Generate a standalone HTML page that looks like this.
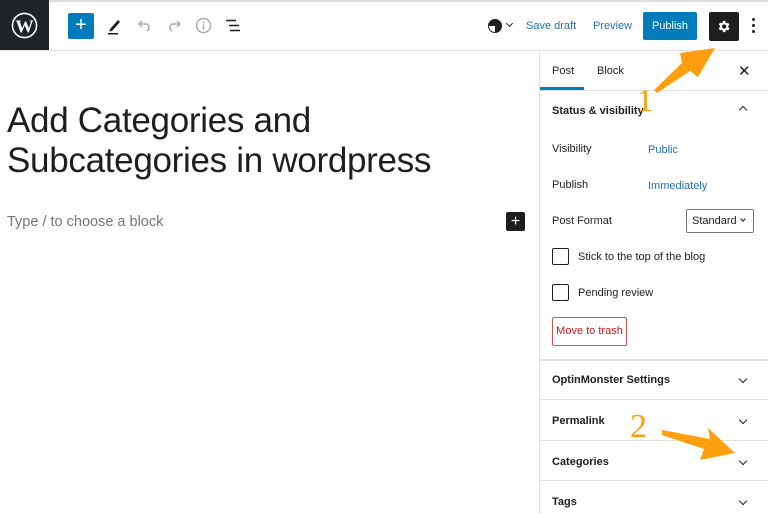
<!DOCTYPE html>
<html><head><meta charset="utf-8"><style>
*{margin:0;padding:0;box-sizing:border-box}
body{width:768px;height:514px;overflow:hidden;background:#fff;font-family:"Liberation Sans",sans-serif;color:#1e1e1e;position:relative}
.a{position:absolute}
.t{font-size:11px;white-space:nowrap}
.b{font-weight:bold;font-size:11px;white-space:nowrap}
.blue{color:#2271b1}
.hr{position:absolute;left:539px;width:229px;height:1px;background:#e0e0e0}
.chev{position:absolute;width:6px;height:6px;border-right:1.5px solid #1e1e1e;border-bottom:1.5px solid #1e1e1e;transform:rotate(45deg)}
.cb{position:absolute;left:552px;width:17px;height:17px;border:1.5px solid #1e1e1e;border-radius:2px}
</style></head><body>
<div class="a" style="left:0;top:0;width:768px;height:2px;background:#ddd"></div>
<div class="a" style="left:0;top:0;width:49px;height:50px;background:#1d2327"></div>
<svg class="a" style="left:11px;top:12px" width="27" height="27" viewBox="0 0 28 28"><circle cx="14" cy="14" r="12.5" fill="none" stroke="#fff" stroke-width="1.6"/><text x="14" y="21" font-family="Liberation Serif" font-weight="bold" font-size="19" fill="#fff" text-anchor="middle">W</text></svg>
<div class="a" style="left:0;top:50px;width:768px;height:1px;background:#e0e0e0"></div>
<div class="a" style="left:68px;top:13px;width:26px;height:26px;background:#007cba;border-radius:2px;color:#fff;font-size:20px;line-height:25px;text-align:center">+</div>
<svg class="a" style="left:106px;top:16px" width="18" height="20" viewBox="0 0 18 20"><path d="M4 13 L12 4 L14 6 L6 15 L3.5 15.5 Z" fill="#1e1e1e"/><rect x="2" y="17" width="10" height="1.5" fill="#1e1e1e"/></svg>
<svg class="a" style="left:137px;top:18px" width="16" height="14" viewBox="0 0 16 14"><path d="M5 3 L2 6 L5 9 M2 6 H10 a4 4 0 0 1 0 7" fill="none" stroke="#aaa" stroke-width="1.5"/></svg>
<svg class="a" style="left:166px;top:18px" width="16" height="14" viewBox="0 0 16 14"><path d="M11 3 L14 6 L11 9 M14 6 H6 a4 4 0 0 0 0 7" fill="none" stroke="#aaa" stroke-width="1.5"/></svg>
<svg class="a" style="left:195px;top:17px" width="17" height="17" viewBox="0 0 17 17"><circle cx="8.5" cy="8.5" r="7" fill="none" stroke="#aaa" stroke-width="1.4"/><rect x="7.8" y="7.5" width="1.5" height="5" fill="#aaa"/><rect x="7.8" y="4.5" width="1.5" height="1.5" fill="#aaa"/></svg>
<svg class="a" style="left:224px;top:18px" width="18" height="15" viewBox="0 0 18 15"><path d="M2 2.5H12M5 7.5H15M6 12.5H16" stroke="#1e1e1e" stroke-width="1.5"/></svg>
<svg class="a" style="left:487px;top:18px" width="16" height="16" viewBox="0 0 16 16"><circle cx="8" cy="8" r="7" fill="#1e1e1e"/><path d="M8 8 H2 A6 6 0 0 0 8 14Z" fill="#fff"/></svg>
<div class="chev" style="left:507px;top:21px;width:5px;height:5px;border-width:1.3px"></div>
<div class="a t blue" style="left:526px;top:20px">Save draft</div>
<div class="a t blue" style="left:593px;top:20px">Preview</div>
<div class="a" style="left:643px;top:12px;width:54px;height:28px;background:#007cba;border-radius:2px;color:#fff;font-size:11px;line-height:28px;text-align:center">Publish</div>
<div class="a" style="left:709px;top:12px;width:30px;height:29px;background:#1e1e1e;border-radius:2px"></div>
<svg class="a" style="left:716px;top:19px" width="15" height="15" viewBox="0 0 24 24"><path fill="#fff" d="M19.4 13a7.5 7.5 0 0 0 0-2l2.1-1.6-2-3.5-2.5 1a7.6 7.6 0 0 0-1.7-1L15 3h-4l-.4 2.7a7.6 7.6 0 0 0-1.7 1l-2.5-1-2 3.5L6.5 11a7.5 7.5 0 0 0 0 2l-2.1 1.6 2 3.5 2.5-1a7.6 7.6 0 0 0 1.7 1L11 21h4l.4-2.7a7.6 7.6 0 0 0 1.7-1l2.5 1 2-3.5zM13 15.5a3.5 3.5 0 1 1 0-7 3.5 3.5 0 0 1 0 7z"/></svg>
<div class="a" style="left:752px;top:18px;width:3px;height:3px;background:#1e1e1e;border-radius:50%;box-shadow:0 6px 0 #1e1e1e,0 12px 0 #1e1e1e"></div>

<div class="a" style="left:7px;top:101px;font-size:35px;line-height:40px;color:#1e1e1e;white-space:nowrap;letter-spacing:-0.3px">Add Categories and<br>Subcategories in wordpress</div>
<div class="a" style="left:7px;top:214px;font-size:14.5px;color:#757575">Type / to choose a block</div>
<div class="a" style="left:506px;top:212px;width:19px;height:19px;background:#1e1e1e;border-radius:2px;color:#fff;font-size:16px;line-height:19px;text-align:center">+</div>

<div class="a" style="left:539px;top:51px;width:1px;height:463px;background:#e0e0e0"></div>
<div class="a t" style="left:552px;top:65px">Post</div>
<div class="a t" style="left:597px;top:65px">Block</div>
<div class="a" style="left:540px;top:87px;width:44px;height:3px;background:#007cba"></div>
<div class="a" style="left:738px;top:62px;font-size:15px">✕</div>
<div class="hr" style="top:90px"></div>
<div class="a b" style="left:552px;top:105px">Status &amp; visibility</div>
<div class="chev" style="left:740px;top:107px;transform:rotate(225deg)"></div>
<div class="a t" style="left:552px;top:143px">Visibility</div><div class="a t blue" style="left:648px;top:144px">Public</div>
<div class="a t" style="left:552px;top:179px">Publish</div><div class="a t blue" style="left:648px;top:180px">Immediately</div>
<div class="a t" style="left:552px;top:215px">Post Format</div>
<div class="a" style="left:686px;top:209px;width:68px;height:24px;border:1px solid #757575;border-radius:2px"></div>
<div class="a t" style="left:692px;top:215px">Standard</div>
<div class="chev" style="left:741px;top:217px;width:4px;height:4px;border-width:1.2px"></div>
<div class="cb" style="top:248px"></div><div class="a t" style="left:578px;top:251px">Stick to the top of the blog</div>
<div class="cb" style="top:284px"></div><div class="a t" style="left:578px;top:287px">Pending review</div>
<div class="a" style="left:552px;top:317px;width:75px;height:29px;border:1px solid #d94f4f;border-radius:2px;color:#cc1818;font-size:11px;line-height:27px;text-align:center">Move to trash</div>
<div class="hr" style="top:359px;height:2px"></div>
<div class="a b" style="left:552px;top:374px">OptinMonster Settings</div><div class="chev" style="left:740px;top:376px"></div>
<div class="hr" style="top:399px"></div>
<div class="a b" style="left:552px;top:415px">Permalink</div><div class="chev" style="left:740px;top:417px"></div>
<div class="hr" style="top:440px"></div>
<div class="a b" style="left:552px;top:456px">Categories</div><div class="chev" style="left:740px;top:458px"></div>
<div class="hr" style="top:480px"></div>
<div class="a b" style="left:552px;top:496px">Tags</div><div class="chev" style="left:740px;top:498px"></div>

<svg class="a" style="left:0;top:0" width="768" height="514">
<polygon points="654,90 682,63 680,53 715,48 698,77 690,71 657,93" fill="#ff9f0f"/>
<text x="637" y="111" font-family="Liberation Serif" font-size="32" fill="#ff9f0f">1</text>
<polygon points="662,430 710,439 708,428 735,453 700,460 704,449 662,435" fill="#ff9f0f"/>
<text x="630" y="437" font-family="Liberation Serif" font-size="34" fill="#ff9f0f">2</text>
</svg>
</body></html>
